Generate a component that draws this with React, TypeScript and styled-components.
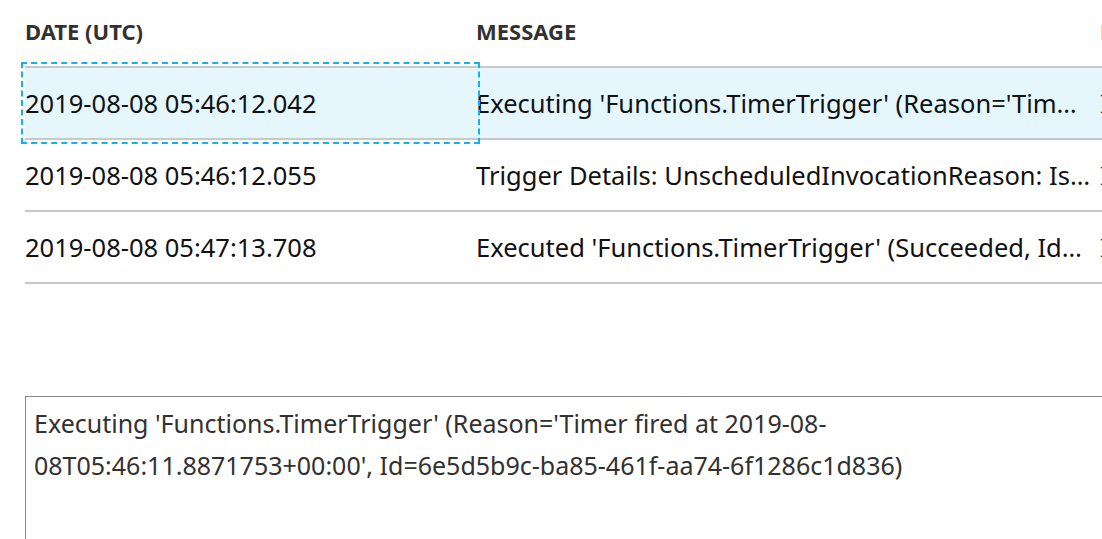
import React from "react";
import styled, { createGlobalStyle } from "styled-components";

const GlobalStyle = createGlobalStyle`
  html, body {
    margin: 0;
    padding: 0;
    background: #fff;
    overflow: hidden;
  }
  body {
    font-family: "Noto Sans", "Open Sans", "DejaVu Sans", sans-serif;
    color: #201f1e;
  }
`;

// 页面
const Page = styled.div`
  width: 1102px;
  height: 539px;
  overflow: hidden;
  padding-left: 25px;
  box-sizing: border-box;
`;

const Grid = styled.div`
  display: grid;
  grid-template-columns: 451px 624px 300px;
  width: 1375px;
`;

const HeadCell = styled.div`
  height: 66px;
  display: flex;
  align-items: center;
  padding-bottom: 4px;
  box-sizing: border-box;
  font-size: 22px;
  font-weight: 700;
  color: #323130;
  white-space: nowrap;
`;

const Cell = styled.div<{ $selected?: boolean; $first?: boolean }>`
  height: ${(p) => (p.$first ? "74px" : "72px")};
  display: flex;
  align-items: center;
  box-sizing: border-box;
  border-bottom: 2px solid #c8c8c8;
  border-top: ${(p) => (p.$first ? "2px solid #c8c8c8" : "0")};
  background: ${(p) => (p.$selected ? "#e5f7fd" : "#fff")};
  font-size: 25.5px;
  color: #111;
  white-space: nowrap;
  overflow: hidden;
  min-width: 0;
`;

const CellText = styled.span`
  display: block;
  overflow: hidden;
  text-overflow: ellipsis;
  padding-right: 9px;
  width: 100%;
  box-sizing: border-box;
`;

const FocusCell = styled(Cell)`
  outline: 2px dashed #10b4ec;
  outline-offset: 2px;
  position: relative;
  z-index: 1;
  overflow: visible;
`;

const Detail = styled.div`
  margin-top: 112px;
  height: 200px;
  border: 1px solid #8a8886;
  border-right: 0;
  padding: 5px 8px;
  box-sizing: border-box;
  font-size: 25px;
  line-height: 42px;
  color: #323130;
  width: 1100px;
`;

type Row = { date: string; message: string; level: string };

const rows: Row[] = [
  {
    date: "2019-08-08 05:46:12.042",
    message: "Executing 'Functions.TimerTrigger' (Reason='Timer fired at 2019-08-08T05:46:11.8871753+00:00', Id=6e5d5b9c-ba85-461f-aa74-6f1286c1d836)",
    level: "Information",
  },
  {
    date: "2019-08-08 05:46:12.055",
    message: "Trigger Details: UnscheduledInvocationReason: IsPastDue, OriginalSchedule: 2019-08-08T05:46:00.0000000+00:00",
    level: "Information",
  },
  {
    date: "2019-08-08 05:47:13.708",
    message: "Executed 'Functions.TimerTrigger' (Succeeded, Id=6e5d5b9c-ba85-461f-aa74-6f1286c1d836)",
    level: "Information",
  },
];

export default function App() {
  const selected = 0;

  return (
    <Page>
      <GlobalStyle />
      <Grid>
        <HeadCell>DATE (UTC)</HeadCell>
        <HeadCell>MESSAGE</HeadCell>
        <HeadCell>LEVEL</HeadCell>
        {rows.map((r, i) => {
          const DateCell = i === selected ? FocusCell : Cell;
          return (
            <React.Fragment key={r.date}>
              <DateCell $selected={i === selected} $first={i === 0}>
                <CellText>{r.date}</CellText>
              </DateCell>
              <Cell $selected={i === selected} $first={i === 0}>
                <CellText>{r.message}</CellText>
              </Cell>
              <Cell $selected={i === selected} $first={i === 0}>
                <CellText>{r.level}</CellText>
              </Cell>
            </React.Fragment>
          );
        })}
      </Grid>
      <Detail>{rows[selected].message}</Detail>
    </Page>
  );
}
